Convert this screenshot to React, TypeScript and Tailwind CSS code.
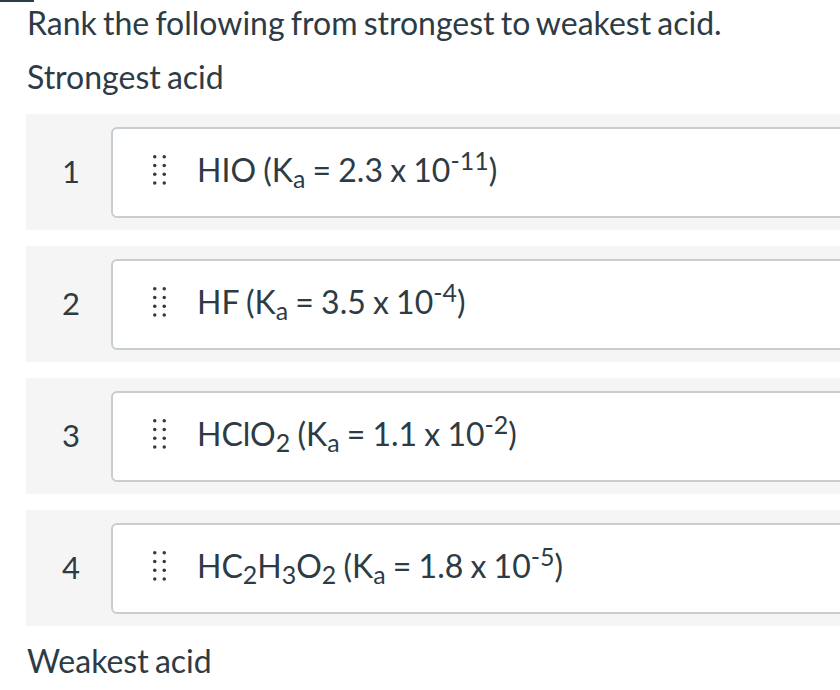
import React from "react";

function Dots() {
  const cols = [1.75, 11.25];
  const rows = [1.75, 10.5, 19.25, 28];
  return (
    <svg width="13" height="30" viewBox="0 0 13 30" className="shrink-0">
      {cols.map((cx) =>
        rows.map((cy) => <circle key={`${cx}-${cy}`} cx={cx} cy={cy} r="1.75" fill="#2d3b45" />)
      )}
    </svg>
  );
}

const items: { n: number; label: React.ReactNode }[] = [
  {
    n: 1,
    label: (
      <>
        HIO (K<sub>a</sub> = 2.3 x 10<sup>-11</sup>)
      </>
    ),
  },
  {
    n: 2,
    label: (
      <>
        HF (K<sub>a</sub> = 3.5 x 10<sup>-4</sup>)
      </>
    ),
  },
  {
    n: 3,
    label: (
      <>
        HClO<sub>2</sub> (K<sub>a</sub> = 1.1 x 10<sup>-2</sup>)
      </>
    ),
  },
  {
    n: 4,
    label: (
      <>
        HC<sub>2</sub>H<sub>3</sub>O<sub>2</sub> (K<sub>a</sub> = 1.8 x 10<sup>-5</sup>)
      </>
    ),
  },
];

export default function App() {
  return (
    <div className="w-[840px] h-[690px] overflow-hidden bg-white font-['Lato','Liberation_Sans',sans-serif] text-[#2d3b45] [word-spacing:-2px]">
      <div className="w-[34px] h-[2px] bg-[#2d3b45]" />
      <p className="pl-[27px] text-[32px] leading-[42px]">
        Rank the following from strongest to weakest acid.
      </p>
      <p className="mt-[12px] pl-[27px] text-[32px] leading-[42px]">Strongest acid</p>
      <div className="mt-[16px] ml-[26px] flex flex-col gap-[16px]">
        {items.map((it) => (
          <div key={it.n} className="h-[116px] bg-[#f5f5f5] flex items-center">
            <div className="w-[85px] shrink-0 text-center text-[31px] leading-none pl-[5px] pb-[2px]">{it.n}</div>
            <div className="h-[91px] w-[760px] shrink-0 bg-white border-2 border-[#c7cdd1] rounded-[6px] flex items-center pl-[40px] pb-[4px]">
              <Dots />
              <span className="ml-[31px] text-[32px] leading-none whitespace-nowrap [word-spacing:-1px] [&_sub]:[font-size:78%] [&_sup]:[font-size:78%]">
                {it.label}
              </span>
            </div>
          </div>
        ))}
      </div>
      <p className="mt-[14px] pl-[27px] text-[32px] leading-[42px]">Weakest acid</p>
    </div>
  );
}
